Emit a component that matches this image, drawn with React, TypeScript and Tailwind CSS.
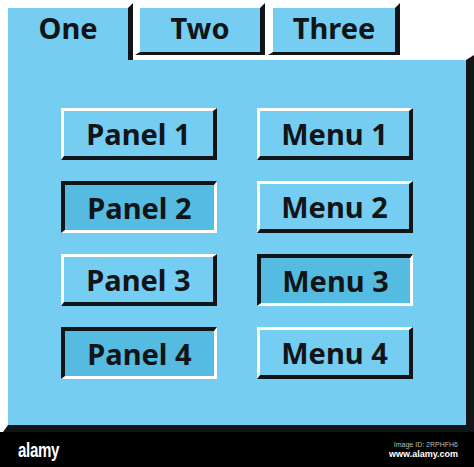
import React from 'react';

const BLUE = 'bg-[#75cdf2]';

const raised =
  'border-t-[3px] border-l-[3px] border-b-[4px] border-r-[4px] border-t-white border-l-white border-b-[#111517] border-r-[#111517] bg-[#75cdf2]';
const pressed =
  'border-t-[4px] border-l-[4px] border-b-[3px] border-r-[3px] border-t-[#111517] border-l-[#111517] border-b-white border-r-white bg-[#56bbe0]';

const buttons = [
  { label: 'Panel 1', down: false },
  { label: 'Menu 1', down: false },
  { label: 'Panel 2', down: true },
  { label: 'Menu 2', down: false },
  { label: 'Panel 3', down: false },
  { label: 'Menu 3', down: true },
  { label: 'Panel 4', down: true },
  { label: 'Menu 4', down: false },
];

const App: React.FC = () => {
  return (
    <div className="w-[474px] h-[467px] bg-white flex flex-col font-['Noto_Sans',sans-serif] text-[#111517] overflow-hidden">
      {/* tab strip */}
      <div className="flex pl-[3px] pt-[3px]">
        <div className={`w-[130px] h-[57px] border-t-[5px] border-l-[5px] border-r-[5px] border-t-white border-l-white border-r-[#111517] ${BLUE} flex justify-center pt-[5px]`}>
          <span className="text-[29px] leading-[29px] font-bold">One</span>
        </div>
        <div className="flex-1 flex flex-col">
          <div className="flex ml-[2px] gap-[3px]">
            <div className={`w-[130px] h-[52px] border-t-[5px] border-l-[5px] border-r-[5px] border-b-[3px] border-t-white border-l-white border-r-[#111517] border-b-[#111517] ${BLUE} flex justify-center pt-[5px]`}>
              <span className="text-[29px] leading-[29px] font-bold">Two</span>
            </div>
            <div className={`w-[132px] h-[52px] border-t-[5px] border-l-[5px] border-r-[5px] border-b-[3px] border-t-white border-l-white border-r-[#111517] border-b-[#111517] ${BLUE} flex justify-center pt-[5px]`}>
              <span className="text-[29px] leading-[29px] font-bold">Three</span>
            </div>
          </div>
          <div className="h-[5px] border-t-[5px] border-r-[8px] border-t-white border-r-[#111517]"></div>
        </div>
      </div>

      {/* panel body */}
      <div className={`ml-[3px] flex-1 border-l-[5px] border-r-[8px] border-b-[7px] border-l-white border-r-[#111517] border-b-[#111517] ${BLUE} pt-[48px] pl-[53px]`}>
        <div className="grid grid-cols-[156px_156px] gap-x-[40px] gap-y-[21px]">
          {buttons.map((b) => (
            <div
              key={b.label}
              className={`h-[52px] flex items-center justify-center ${b.down ? pressed : raised}`}
            >
              <span className="text-[29px] leading-[29px] font-bold">{b.label}</span>
            </div>
          ))}
        </div>
      </div>

      {/* footer */}
      <div className="h-[35px] bg-black flex items-center justify-between pl-[18px] pr-[16px]">
        <span className="inline-block origin-left scale-x-[0.72] font-['Liberation_Sans',sans-serif] font-bold text-white text-[21px] tracking-[-0.5px]">alamy</span>
        <div className="flex flex-col items-end leading-none font-['Liberation_Sans',sans-serif]">
          <span className="text-[7px] text-[#bdbdbd]">Image ID: 2RPHFH6</span>
          <span className="text-[9px] font-bold text-white mt-[2px]">www.alamy.com</span>
        </div>
      </div>
    </div>
  );
};

export default App;
